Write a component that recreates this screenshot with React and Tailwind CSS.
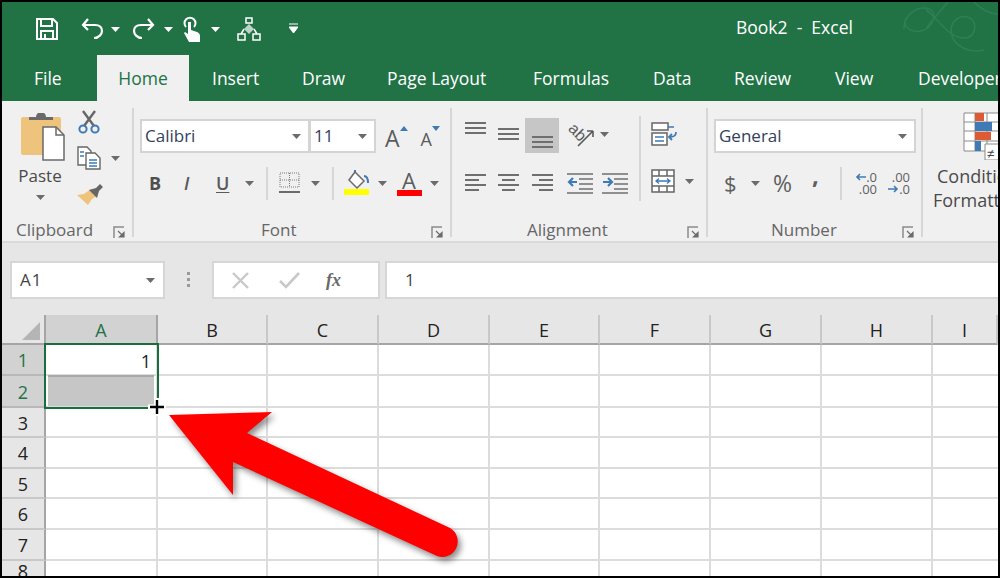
import React from "react";

const Caret = ({ className = "" }) => (
  <svg width="9" height="5" viewBox="0 0 9 5" className={className}>
    <path d="M0 0h9L4.5 5z" fill="#6b6b6b" />
  </svg>
);

const WhiteCaret = ({ className = "" }) => (
  <svg width="9" height="5" viewBox="0 0 9 5" className={className}>
    <path d="M0 0h9L4.5 5z" fill="#fff" />
  </svg>
);

const Launcher = () => (
  <svg width="13" height="13" viewBox="0 0 13 13" className="ml-auto mr-[6px] mb-[1px]">
    <path d="M1 12V1h10" fill="none" stroke="#8a8a8a" strokeWidth="1.5" />
    <path d="M5 5l6 6M11 6.500V11H6.500z" fill="#6b6b6b" stroke="#6b6b6b" strokeWidth="1.2" />
  </svg>
);

// lines for the alignment buttons, widths are given per line
const Lines = ({ rows, className = "" }) => (
  <svg width="22" height="18" viewBox="0 0 22 18" className={className}>
    {rows.map(([x1, x2, y]) => (
      <path key={y} d={`M${x1} ${y}H${x2}`} stroke="#6f6f6f" strokeWidth="2" />
    ))}
  </svg>
);

const GroupLabel = ({ children, className }) => (
  <div className="mt-auto -mb-[3px] flex items-end h-[20px]">
    <span className={`text-[17px] leading-[20px] text-[#666666] ${className}`}>{children}</span>
    <Launcher />
  </div>
);

const Group = ({ className, children }) => (
  <div className={`flex flex-col h-[129px] border-r-2 border-[#d6d6d6] shrink-0 ${className}`}>{children}</div>
);

const Combo = ({ text, className }) => (
  <div className={`h-[34px] bg-white border-2 border-[#d4d4d4] flex items-center pl-[3px] pr-[7px] text-[17px] text-[#33415c] ${className}`}>
    <span>{text}</span>
    <Caret className="ml-auto" />
  </div>
);

const Clipboard = () => (
  <Group className="w-[132px]">
    <div className="flex pl-[16px]">
      <div className="w-[48px] flex flex-col items-center pt-[5px]">
        <svg width="46" height="48" viewBox="0 0 46 48" className="ml-[2px]">
          <path d="M3 4h36a2 2 0 0 1 2 2v36H3a2 2 0 0 1-2-2V6a2 2 0 0 1 2-2z" fill="#eec47c" />
          <path d="M9 7V4h7a5 5 0 0 1 10 0h7v3z" fill="#6a6a6a" />
          <path d="M23 14h13l8 8v25H23z" fill="#fff" stroke="#6a6a6a" strokeWidth="1.5" />
          <path d="M36 14v8h8" fill="none" stroke="#6a6a6a" strokeWidth="1.5" />
        </svg>
        <span className="text-[17px] leading-[24px] text-[#4a4a4a] mt-[3px] -ml-[4px]">Paste</span>
        <Caret className="mt-[7px] -ml-[4px]" />
      </div>
      <div className="ml-[11px] flex flex-col pt-[2px]">
        <svg width="24" height="24" viewBox="0 0 24 24">
          <path d="M6 1l11 15M18 1L7 16" stroke="#666" strokeWidth="2.4" fill="none" />
          <circle cx="6" cy="19" r="3.6" fill="none" stroke="#3f7ab5" strokeWidth="2" />
          <circle cx="18" cy="19" r="3.6" fill="none" stroke="#3f7ab5" strokeWidth="2" />
        </svg>
        <div className="flex items-center mt-[12px]">
          <svg width="25" height="24" viewBox="0 0 25 24">
            <path d="M1 1h9l4 4v14H1z" fill="#fff" stroke="#666" strokeWidth="1.4" />
            <path d="M9 7h9l5 5v11H9z" fill="#fff" stroke="#666" strokeWidth="1.4" />
            <path d="M12 14h8M12 17h8M12 20h8M3 6h4M3 10h4" stroke="#3f7ab5" strokeWidth="1.3" />
          </svg>
          <Caret className="ml-[9px]" />
        </div>
        <svg width="26" height="22" viewBox="0 0 26 22" className="mt-[13px]">
          <path d="M0 12l7-1 7-5 6 7-5 3-4 6z" fill="#eec47c" />
          <path d="M12 7l7-2 4-4 3 3-4 4-2 7z" fill="#666" />
        </svg>
      </div>
    </div>
    <GroupLabel className="ml-[14px]">Clipboard</GroupLabel>
  </Group>
);

const Font = () => (
  <Group className="w-[318px]">
    <div className="flex items-center pl-[6px] mt-[11px]">
      <Combo text="Calibri" className="w-[170px]" />
      <Combo text="11" className="w-[67px] -ml-[1px]" />
      <div className="ml-[9px] flex items-end h-[30px]">
        <span className="text-[23px] leading-[26px] text-[#5c5c5c]">A</span>
        <svg width="8" height="5" viewBox="0 0 8 5" className="mb-[20px]"><path d="M4 0l4 5H0z" fill="#3f7ab5" /></svg>
      </div>
      <div className="ml-[13px] flex items-end h-[30px]">
        <span className="text-[18px] leading-[24px] text-[#5c5c5c]">A</span>
        <svg width="8" height="5" viewBox="0 0 8 5" className="mb-[20px]"><path d="M0 0h8L4 5z" fill="#3f7ab5" /></svg>
      </div>
    </div>
    <div className="flex items-center h-[36px] mt-[12px] text-[#5a5a5a] text-[18px]">
      <span className="ml-[15px] font-bold w-[14px] text-[#4f4f4f]">B</span>
      <span className="ml-[21px] italic w-[12px] font-semibold">I</span>
      <span className="ml-[20px] underline underline-offset-2 font-semibold w-[16px]">U</span>
      <Caret className="ml-[13px]" />
      <div className="ml-[12px] w-[2px] h-[33px] bg-[#d6d6d6]" />
      <svg width="21" height="22" viewBox="0 0 21 22" className="ml-[11px]">
        <path d="M1 1h19v14H1zM10.500 1v14M1 8h19" fill="none" stroke="#7a7a7a" strokeWidth="1" strokeDasharray="1 1" />
        <path d="M0 20h21" stroke="#6a6a6a" strokeWidth="2" />
      </svg>
      <Caret className="ml-[11px]" />
      <div className="ml-[12px] w-[2px] h-[33px] bg-[#d6d6d6]" />
      <svg width="26" height="26" viewBox="0 0 26 26" className="ml-[10px]">
        <path d="M11 2l9 9-7 7-8-8z" fill="#fff" stroke="#6a6a6a" strokeWidth="1.5" />
        <path d="M11 2V0M20 6c3 0 4 3 4 7" fill="none" stroke="#3f7ab5" strokeWidth="2" />
        <path d="M0 19h25v6H0z" fill="#ffff00" />
      </svg>
      <Caret className="ml-[8px]" />
      <div className="ml-[10px] flex flex-col items-center w-[24px]">
        <span className="text-[22px] leading-[20px] text-[#5c5c5c]">A</span>
        <div className="w-[25px] h-[6px] bg-[#ff0000] shrink-0" />
      </div>
      <Caret className="ml-[9px]" />
    </div>
    <GroupLabel className="ml-[127px]">Font</GroupLabel>
  </Group>
);

const Alignment = () => (
  <Group className="w-[256px]">
    <div className="flex flex-1">
      <div className="w-[187px] pl-[12px]">
        <div className="flex h-[36px] mt-[10px]">
          <Lines rows={[[1, 22, 4], [1, 22, 9], [1, 22, 14]]} className="mt-[1px]" />
          <Lines rows={[[1, 22, 4], [1, 22, 9], [1, 22, 14]]} className="ml-[11px] mt-[7px]" />
          <div className="ml-[6px] w-[34px] h-[35px] bg-[#c6c6c6] pl-[6px] pt-[15px]">
            <Lines rows={[[1, 22, 4], [1, 22, 9], [1, 22, 14]]} />
          </div>
          <svg width="27" height="24" viewBox="0 0 27 24" className="ml-[9px] mt-[5px] overflow-visible">
            <path d="M10 23L25 8M25 8h-6M25 8v6" fill="none" stroke="#5a5a5a" strokeWidth="1.6" />
            <text x="1" y="13" fontSize="16" fontFamily="Liberation Sans" fill="#5a5a5a" transform="rotate(45 8 8)">ab</text>
          </svg>
          <Caret className="ml-[5px] mt-[14px]" />
        </div>
        <div className="flex mt-[19px]">
          <Lines rows={[[1, 22, 2], [1, 15, 7], [1, 22, 12], [1, 15, 17]]} />
          <Lines rows={[[1, 22, 2], [5, 18, 7], [1, 22, 12], [5, 18, 17]]} className="ml-[11px]" />
          <Lines rows={[[1, 22, 2], [8, 22, 7], [1, 22, 12], [8, 22, 17]]} className="ml-[12px]" />
          <svg width="26" height="21" viewBox="0 0 26 21" className="ml-[14px]">
            <path d="M0 1h26M12 6h14M12 11h14M12 16h14M0 20h26" stroke="#6f6f6f" strokeWidth="1.7" />
            <path d="M10 9H2M6 5L2 9l4 4" fill="none" stroke="#3f7ab5" strokeWidth="2.2" />
          </svg>
          <svg width="26" height="21" viewBox="0 0 26 21" className="ml-[9px]">
            <path d="M0 1h26M12 6h14M12 11h14M12 16h14M0 20h26" stroke="#6f6f6f" strokeWidth="1.7" />
            <path d="M1 9h8M6 5l4 4-4 4" fill="none" stroke="#3f7ab5" strokeWidth="2.2" />
          </svg>
        </div>
      </div>
      <div className="w-[2px] h-[85px] bg-[#d6d6d6] mt-[8px]" />
      <div className="ml-[10px] pt-[14px]">
        <svg width="27" height="24" viewBox="0 0 27 24">
          <path d="M1 1h16v7H1zM1 11h15v12H1z" fill="#fff" stroke="#666" strokeWidth="1.5" />
          <path d="M17 5h6M4 15h9M4 19h9" stroke="#3f7ab5" strokeWidth="1.4" />
          <path d="M25 10c0 4-2 5-7 5M21 12l-3 3 3 3" fill="none" stroke="#3f7ab5" strokeWidth="1.8" />
        </svg>
        <div className="flex items-center mt-[23px]">
          <svg width="24" height="24" viewBox="0 0 24 24">
            <path d="M1 1h22v22H1zM1 7h22M1 17h22M8 1v6M16 1v6M8 17v6M16 17v6" fill="#fff" stroke="#666" strokeWidth="1.5" />
            <path d="M5 12h14M8 9.500L5 12l3 2.500M16 9.500l3 2.500-3 2.500" fill="none" stroke="#3f7ab5" strokeWidth="1.3" />
          </svg>
          <Caret className="ml-[10px]" />
        </div>
      </div>
    </div>
    <GroupLabel className="ml-[75px]">Alignment</GroupLabel>
  </Group>
);

const NumberGroup = () => (
  <Group className="w-[215px]">
    <Combo text="General" className="w-[202px] ml-[6px] mt-[11px]" />
    <div className="flex items-center h-[36px] mt-[12px] text-[#5f5f5f]">
      <span className="ml-[16px] w-[14px] text-[22px]">$</span>
      <Caret className="ml-[13px]" />
      <span className="ml-[13px] text-[23px] w-[21px]">%</span>
      <span className="ml-[18px] text-[24px] font-bold w-[10px] leading-[20px] -mt-[16px]">,</span>
      <div className="ml-[18px] w-[2px] h-[33px] bg-[#d6d6d6]" />
      <div className="ml-[9px] w-[26px] flex flex-col items-end text-[13px] leading-[12px]">
        <div className="flex items-center h-[12px]">
          <svg width="11" height="8" viewBox="0 0 11 8"><path d="M11 4H2M5 1L2 4l3 3" fill="none" stroke="#3f7ab5" strokeWidth="1.6" /></svg>
          <span>.0</span>
        </div>
        <span>.00</span>
      </div>
      <div className="ml-[8px] w-[25px] flex flex-col items-end text-[13px] leading-[12px]">
        <span>.00</span>
        <div className="flex items-center h-[12px]">
          <svg width="11" height="8" viewBox="0 0 11 8"><path d="M0 4h9M6 1l3 3-3 3" fill="none" stroke="#3f7ab5" strokeWidth="1.6" /></svg>
          <span>.0</span>
        </div>
      </div>
    </div>
    <GroupLabel className="ml-[63px]">Number</GroupLabel>
  </Group>
);

const Styles = () => (
  <div className="flex-1 min-w-0 overflow-hidden h-[129px]">
    <svg width="37" height="48" viewBox="0 0 37 48" className="ml-[40px] mt-[4px]">
      <path d="M1 1h36v38H1zM1 10h36M1 19h36M1 29h36M12 1v38M24 1v38" fill="#fff" stroke="#8a8a8a" />
      <path d="M12 1h9v8h-9zM12 20h16v8H12z" fill="#dd5a32" />
      <path d="M12 10h17v9H12zM12 29h6v10h-6z" fill="#3f7ab5" />
      <path d="M22 32h15v16H22z" fill="#fff" stroke="#8a8a8a" />
      <text x="24" y="46" fontSize="13" fontFamily="Liberation Sans" fill="#444">≠</text>
    </svg>
    <div className="text-[18px] leading-[24px] text-[#4a4a4a] whitespace-nowrap mt-[4px] ml-[14px]">Conditional</div>
    <div className="text-[18px] leading-[24px] text-[#4a4a4a] whitespace-nowrap ml-[10px]">Formatting</div>
  </div>
);

const columns = ["A", "B", "C", "D", "E", "F", "G", "H", "I"];
const rows = [1, 2, 3, 4, 5, 6, 7, 8];

const Sheet = () => (
  <div className="relative bg-white grid grid-cols-[44px_112px_110px_111px_111px_110px_111px_111px_111px_65px] grid-rows-[30px_31px_32px_30px_31px_30px_31px_31px_20px] h-[261px] text-[18px] leading-none">
    <div className="bg-[#e6e6e6] border-r-2 border-b-2 border-[#a5a5a5]">
      <svg width="18" height="18" viewBox="0 0 18 18" className="ml-[20px] mt-[7px]">
        <path d="M18 0v18H0z" fill="#b5b5b5" />
      </svg>
    </div>
    {columns.map((c) => (
      <div
        key={c}
        className={`flex items-center justify-center border-b-2 border-[#a5a5a5] border-r-2 pt-[2px] ${
          c === "A" ? "bg-[#d2d2d2] text-[#217346] border-r-[#a5a5a5]" : "bg-[#e6e6e6] text-[#222222] border-r-[#c8c8c8]"
        } ${c === "I" ? "border-r-0" : ""}`}
      >
        {c}
      </div>
    ))}
    {rows.map((r) => (
      <React.Fragment key={r}>
        <div
          className={`flex items-center justify-center border-r-2 border-b-2 border-r-[#a5a5a5] pt-[1px] ${
            r < 3 ? "bg-[#d2d2d2] text-[#217346] border-b-[#b8b8b8]" : "bg-[#e6e6e6] text-[#222222] border-b-[#c8c8c8]"
          }`}
        >
          {r}
        </div>
        {columns.map((c) => (
          <div key={c} className={`border-b-2 border-[#dcdcdc] ${c === "I" ? "" : "border-r-2"}`}>
            {c === "A" && r === 1 && <div className="text-right pr-[5px] pt-[7px] text-[#222222]">1</div>}
            {c === "A" && r === 2 && <div className="ml-[2px] mr-[2px] -mt-[1px] h-[31px] bg-[#c6c6c6] border-t-2 border-[#a8a8a8]" />}
          </div>
        ))}
      </React.Fragment>
    ))}
    {/* selection box */}
    <div className="absolute left-[42px] top-[28px] w-[115px] h-[66px] border-2 border-[#1a6e3e] pointer-events-none" />
    {/* fill cursor */}
    <svg width="20" height="20" viewBox="0 0 20 20" className="absolute left-[145px] top-[82px]">
      <path d="M10 1v18M1 10h18" stroke="#fff" strokeWidth="5" />
      <path d="M10 3v14M3 10h14" stroke="#000" strokeWidth="2.4" />
    </svg>
  </div>
);

export default function App() {
  return (
    <div className="relative w-[1000px] h-[578px] overflow-hidden border-2 border-black bg-[#e6e6e6] font-['Open_Sans',sans-serif]">
      {/* title bar */}
      <div className="relative h-[53px] bg-[#217346] flex items-center text-white">
        <svg width="22" height="22" viewBox="0 0 22 22" className="ml-[34px]">
          <path d="M1 1h16l4 4v16H1z" fill="none" stroke="#fff" strokeWidth="2" />
          <path d="M5 2v6h11V2M5 21v-8h12v8M9 16v4" fill="none" stroke="#fff" strokeWidth="2" />
        </svg>
        <svg width="23" height="22" viewBox="0 0 23 22" className="ml-[23px]">
          <path d="M7 1L2 7l5 5M2 7h12c5 0 7 3 7 6s-3 7-8 7" fill="none" stroke="#fff" strokeWidth="2.2" />
        </svg>
        <WhiteCaret className="ml-[7px] mt-[2px]" />
        <svg width="23" height="22" viewBox="0 0 23 22" className="ml-[12px]">
          <path d="M16 1l5 6-5 5M21 7H9c-5 0-7 3-7 6s3 7 8 7" fill="none" stroke="#fff" strokeWidth="2.2" />
        </svg>
        <WhiteCaret className="ml-[9px] mt-[2px]" />
        <svg width="18" height="26" viewBox="0 0 18 26" className="ml-[9px] mt-[1px]">
          <path d="M4 11a5.500 5.500 0 1 1 8 0" fill="none" stroke="#fff" strokeWidth="2" />
          <path d="M6 6h3v8l6 2c2 1 3 2 3 4v6H7L2 17l1-1 3 2z" fill="#fff" />
        </svg>
        <WhiteCaret className="ml-[11px] mt-[2px]" />
        <svg width="24" height="24" viewBox="0 0 24 24" className="ml-[17px]">
          <path d="M9 1h6v5H9zM1 17h7v6H1zM16 17h7v6h-7z" fill="none" stroke="#fff" strokeWidth="1.5" />
          <path d="M12 7l5 5-5 5-5-5z" fill="#fff" opacity="0.7" />
          <path d="M7 12l-3 5M17 12l3 5" stroke="#fff" strokeWidth="1.5" />
        </svg>
        <svg width="9" height="11" viewBox="0 0 9 11" className="ml-[28px]">
          <path d="M0 1h9M0 4h9L4.500 10z" fill="#fff" stroke="#fff" strokeWidth="1" />
        </svg>
        <span className="absolute left-[734px] top-[13px] text-[17.500px] leading-[24px] whitespace-pre">Book2  -  Excel</span>
        <svg width="98" height="55" viewBox="0 0 98 55" className="absolute right-0 top-0">
          <path d="M4 27c0-15 14-24 25-20 10 4 3 20-8 22C10 31 2 24 6 16M48 0C38 12 30 20 26 27M26 8c10 6 22 28 38 28 12 0 14-16 6-20-10-5-22 4-18 18 3 10 18 18 32 14M74 0c8 8 16 12 24 12" fill="none" stroke="#2f7f55" strokeWidth="1.5" />
        </svg>
      </div>

      {/* tabs */}
      <div className="h-[46px] bg-[#217346] flex text-[17.500px] text-white whitespace-nowrap overflow-hidden">
        <div className="shrink-0 ml-[32px] w-[28px] pt-[10px]">File</div>
        <div className="shrink-0 ml-[35px] w-[92px] bg-[#f0f0f0] text-[#217346] pt-[10px] text-center">Home</div>
        <div className="shrink-0 ml-[23px] w-[45px] pt-[10px]">Insert</div>
        <div className="shrink-0 ml-[45px] w-[41px] pt-[10px]">Draw</div>
        <div className="shrink-0 ml-[44px] w-[101px] pt-[10px]">Page Layout</div>
        <div className="shrink-0 ml-[45px] w-[75px] pt-[10px]">Formulas</div>
        <div className="shrink-0 ml-[45px] w-[42px] pt-[10px]">Data</div>
        <div className="shrink-0 ml-[39px] w-[56px] pt-[10px]">Review</div>
        <div className="shrink-0 ml-[45px] w-[39px] pt-[10px]">View</div>
        <div className="shrink-0 ml-[44px] pt-[10px]">Developer</div>
      </div>

      {/* ribbon */}
      <div className="h-[142px] bg-[#f0f0f0] border-b-2 border-[#dadada] pt-[7px] flex">
        <Clipboard />
        <Font />
        <Alignment />
        <NumberGroup />
        <Styles />
      </div>

      {/* formula bar */}
      <div className="h-[72px] flex items-start pt-[18px] text-[17px] text-[#444444]">
        <div className="ml-[8px] w-[155px] h-[38px] bg-white border-2 border-[#d6d6d6] flex items-center pl-[8px] pr-[8px]">
          <span className="tracking-[1px]">A1</span>
          <Caret className="ml-auto" />
        </div>
        <div className="ml-[22px] w-[3px] h-[15px] mt-[11px] flex flex-col justify-between">
          <div className="h-[3px] bg-[#9a9a9a]" />
          <div className="h-[3px] bg-[#9a9a9a]" />
          <div className="h-[3px] bg-[#9a9a9a]" />
        </div>
        <div className="ml-[22px] w-[168px] h-[38px] bg-white border-2 border-[#d6d6d6] flex items-center">
          <svg width="17" height="17" viewBox="0 0 17 17" className="ml-[18px]">
            <path d="M1 1l15 15M16 1L1 16" stroke="#c8c8c8" strokeWidth="2.4" />
          </svg>
          <svg width="21" height="17" viewBox="0 0 21 17" className="ml-[30px]">
            <path d="M1 9l6 6L20 1" fill="none" stroke="#c8c8c8" strokeWidth="2.6" />
          </svg>
          <span className="ml-[26px] font-['Liberation_Serif',serif] italic font-bold text-[18px] text-[#6a6a6a]">fx</span>
        </div>
        <div className="ml-[5px] flex-1 h-[38px] bg-white border-2 border-r-0 border-[#d6d6d6] flex items-center pl-[18px]">1</div>
      </div>

      <Sheet />

      {/* red arrow */}
      <svg width="1000" height="578" viewBox="0 0 1000 578" className="absolute -left-[2px] -top-[2px] pointer-events-none drop-shadow-[3px_4px_3px_rgba(0,0,0,0.45)]">
        <path d="M169 415L272 412L247 433L450 528A15.500 15.500 0 0 1 437 556L233 462L233 495Z" fill="#ff0000" />
      </svg>
    </div>
  );
}
